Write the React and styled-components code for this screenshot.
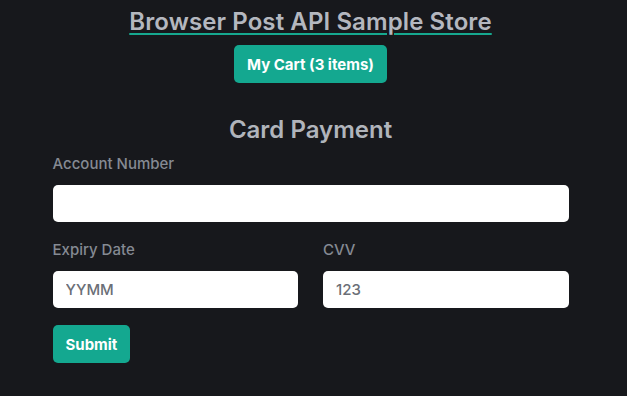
import styled, { createGlobalStyle } from 'styled-components'

const GlobalStyle = createGlobalStyle`
  html, body {
    margin: 0;
    padding: 0;
    background: #17181c;
  }
  body {
    font-family: Inter, "Noto Sans", sans-serif;
  }
`

const Page = styled.div`
  width: 621px;
  min-height: 396px;
  display: flex;
  flex-direction: column;
  align-items: center;
`

const StoreTitle = styled.a`
  margin-top: 7px;
  font-size: 24px;
  font-weight: 600;
  line-height: 29px;
  color: #b4b7bf;
  text-decoration: underline;
  text-decoration-color: #16a88f;
  text-decoration-thickness: 2px;
  text-underline-offset: 3px;
  letter-spacing: 0.1px;
`

const TealButton = styled.button`
  border: none;
  border-radius: 5px;
  background: #14a890;
  color: #ffffff;
  font-family: inherit;
  font-size: 15px;
  font-weight: 700;
  height: 38px;
  padding: 0 ${p => p.$pad || 13}px;
  cursor: pointer;
`

const CartButton = styled(TealButton)`
  margin-top: 9px;
`

const Form = styled.form`
  width: 516px;
  margin-top: 32px;
  display: flex;
  flex-direction: column;
`

const FormTitle = styled.h2`
  margin: 0;
  text-align: center;
  font-size: 24px;
  font-weight: 600;
  line-height: 29px;
  color: #b0b4bb;
`

const Row = styled.div`
  display: grid;
  grid-template-columns: 1fr 1fr;
  column-gap: 25px;
`

const Field = styled.label`
  display: flex;
  flex-direction: column;
  margin-top: ${p => p.$top || 0}px;
`

const Label = styled.span`
  font-size: 15px;
  font-weight: 500;
  color: #858a93;
  line-height: 18px;
  margin-bottom: 12px;
`

const Input = styled.input`
  box-sizing: border-box;
  height: 37px;
  width: 100%;
  border: none;
  border-radius: 5px;
  background: #ffffff;
  padding: 0 13px;
  font-family: inherit;
  font-size: 15px;
  font-weight: 500;
  color: #5f636b;
  outline: none;

  &::placeholder {
    color: #6b6f77;
  }
`

const SubmitRow = styled.div`
  margin-top: 17px;
`

export default function App() {
  return (
    <>
      <GlobalStyle />
      <Page>
        <StoreTitle>Browser Post API Sample Store</StoreTitle>
        <CartButton type="button">My Cart (3 items)</CartButton>
        <Form onSubmit={e => e.preventDefault()}>
          <FormTitle>Card Payment</FormTitle>
          <Field $top={11}>
            <Label>Account Number</Label>
            <Input type="text" />
          </Field>
          <Row>
            <Field $top={19}>
              <Label>Expiry Date</Label>
              <Input type="text" placeholder="YYMM" />
            </Field>
            <Field $top={19}>
              <Label>CVV</Label>
              <Input type="text" placeholder="123" />
            </Field>
          </Row>
          <SubmitRow>
            <TealButton type="submit">Submit</TealButton>
          </SubmitRow>
        </Form>
      </Page>
    </>
  )
}
